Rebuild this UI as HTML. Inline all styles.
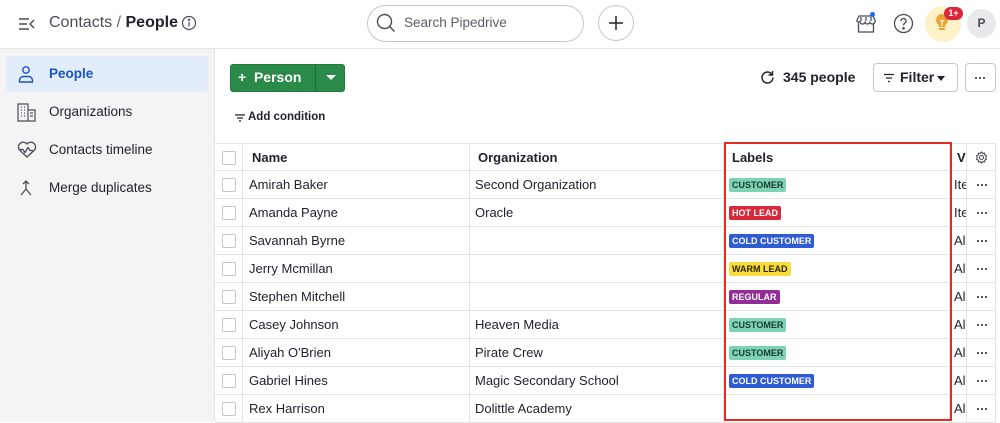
<!DOCTYPE html>
<html><head><meta charset="utf-8"><style>
*{box-sizing:border-box;margin:0;padding:0}
body{width:1000px;height:422px;overflow:hidden;background:#fff;font-family:"Liberation Sans",sans-serif;color:#21232c;position:relative;font-size:13px}
.a{position:absolute}
.hdr{left:0;top:0;width:1000px;height:49px;border-bottom:1px solid #e3e4e6;background:#fff}
.side{left:0;top:49px;width:215px;height:373px;background:#f4f4f5;border-right:1px solid #e3e4e6}
.nav{position:absolute;left:6px;width:202px;height:36px;border-radius:4px;font-size:13.5px;line-height:36px;padding-left:43px;color:#21232c}
.nav svg{position:absolute;left:11px;top:9px}
.tbl{left:215px;top:143px;width:781px}
.row{position:absolute;left:0;width:781px;height:28px;border-bottom:1px solid #e3e4e6;font-size:13px;line-height:27px}
.c{position:absolute;top:0;height:28px;border-right:1px solid #e3e4e6;padding-left:6px;white-space:nowrap;overflow:hidden}
.cb{position:absolute;left:7px;top:7px;width:14px;height:14px;border:1px solid #c5c7cc;border-radius:2px;background:#fff}
.lb{display:inline-block;font-size:9px;font-weight:bold;line-height:14px;padding:0 3px;border-radius:2px;vertical-align:middle;margin-top:-2px}
.cu{background:#7dd3b4;color:#1b3a30}.hl{background:#d9283a;color:#fff}.cc{background:#2f5bd6;color:#fff}.wl{background:#f8dc3c;color:#2b2500}.rg{background:#922d97;color:#fff}
.dots{position:absolute;display:flex;gap:2px}
.dots i{width:2px;height:2px;border-radius:50%;background:#21232c;display:block}
</style></head><body>
<div class="a hdr"></div>
<svg class="a" style="left:18px;top:16px" width="18" height="16" viewBox="0 0 18 16" fill="none" stroke="#4a4d57" stroke-width="1.4"><path d="M1 3h10M1 8h8M1 13h10M16 4l-4 4 4 4"/></svg>
<div class="a" style="left:49px;top:14px;font-size:16px;color:#4a4d57">Contacts <span style="color:#6a6d77">/</span> <b style="color:#21232c">People</b></div>
<svg class="a" style="left:181px;top:15px" width="16" height="16" viewBox="0 0 16 16" fill="none" stroke="#4a4d57" stroke-width="1.2"><circle cx="8" cy="8" r="6.5"/><path d="M8 7v4.5"/><circle cx="8" cy="4.8" r=".6" fill="#4a4d57"/></svg>
<div class="a" style="left:367px;top:5px;width:217px;height:37px;border:1px solid #c5c7cc;border-radius:19px"></div>
<svg class="a" style="left:375px;top:12px" width="22" height="22" viewBox="0 0 22 22" fill="none" stroke="#4a4d57" stroke-width="1.4"><circle cx="9.5" cy="9.5" r="7"/><path d="M14.5 14.5l5 5"/></svg>
<div class="a" style="left:404px;top:15px;font-size:13.5px;color:#5a5d67">Search Pipedrive</div>
<div class="a" style="left:598px;top:5px;width:36px;height:36px;border:1px solid #c5c7cc;border-radius:50%"></div>
<svg class="a" style="left:608px;top:15px" width="16" height="16" viewBox="0 0 16 16" stroke="#21232c" stroke-width="1.5"><path d="M8 1v14M1 8h14"/></svg>
<svg class="a" style="left:855px;top:14px" width="22" height="20" viewBox="0 0 22 20" fill="none" stroke="#4a4d57" stroke-width="1.3"><path d="M2 6l2-4h14l2 4v1.5a2.5 2.5 0 01-5 0 2.5 2.5 0 01-5 0 2.5 2.5 0 01-5 0 2.5 2.5 0 01-3 0z M3.5 9v9h15V9M6 3v4M11 3v4M16 3v4"/></svg>
<div class="a" style="left:870px;top:12px;width:5px;height:5px;border-radius:50%;background:#1a6ef0"></div>
<svg class="a" style="left:893px;top:13px" width="21" height="21" viewBox="0 0 21 21" fill="none" stroke="#4a4d57" stroke-width="1.3"><circle cx="10.5" cy="10.5" r="9"/><path d="M8 8a2.5 2.5 0 114 2c-1 .7-1.5 1.2-1.5 2.5"/><circle cx="10.5" cy="15.3" r=".7" fill="#4a4d57"/></svg>
<div class="a" style="left:925px;top:6px;width:36px;height:36px;border-radius:50%;background:#fdf1c8"></div>
<svg class="a" style="left:935px;top:13px" width="14" height="20" viewBox="0 0 14 20"><path d="M7 1a6 6 0 00-3.5 10.8V14h7v-2.2A6 6 0 007 1z" fill="#eba430"/><rect x="3.8" y="15" width="6.4" height="2" rx="1" fill="#eba430"/><path d="M5 7l2 2 2-2M7 9v4" stroke="#fff" stroke-width="1.1" fill="none"/></svg>
<div class="a" style="left:944px;top:7px;width:19px;height:13px;border-radius:7px;background:#d9283a;color:#fff;font-size:9px;font-weight:bold;text-align:center;line-height:13px">1+</div>
<div class="a" style="left:967px;top:9px;width:29px;height:29px;border-radius:50%;background:#e8e9eb;color:#4a4d57;font-size:12px;font-weight:bold;text-align:center;line-height:29px">P</div>

<div class="a side">
<div class="nav" style="top:7px;background:#e2ecfb;color:#1754c4;font-weight:bold"><svg width="18" height="18" viewBox="0 0 18 18" fill="none" stroke="#1754c4" stroke-width="1.4"><circle cx="9" cy="5" r="3.2"/><path d="M2.5 17v-1.5a4 4 0 014-4h5a4 4 0 014 4V17z"/></svg>People</div>
<div class="nav" style="top:45px"><svg width="19" height="19" viewBox="0 0 19 19" fill="none" stroke="#4a4d57" stroke-width="1.2"><path d="M1 1h10v17H1zM11 7h7v11h-7M4 4h1M7 4h1M4 7h1M7 7h1M4 10h1M7 10h1M4 13h1M7 13h1M13 10h3M13 13h3"/></svg>Organizations</div>
<div class="nav" style="top:83px"><svg width="20" height="18" viewBox="0 0 20 18" fill="none" stroke="#4a4d57" stroke-width="1.3"><path d="M10 16L2.5 9A4.5 4.5 0 0110 3a4.5 4.5 0 017.5 6z M3 8.5h3l2 3 3-5 2 3h3"/></svg>Contacts timeline</div>
<div class="nav" style="top:121px"><svg width="18" height="18" viewBox="0 0 18 18" fill="none" stroke="#4a4d57" stroke-width="1.3"><path d="M9 2v8M6 5l3-3 3 3M9 10l-5 6M9 10l5 6"/></svg>Merge duplicates</div>
</div>

<div class="a" style="left:230px;top:64px;width:115px;height:28px;background:#2a8a4a;border-radius:3px;border:1px solid #1f7a3e"></div>
<div class="a" style="left:315px;top:64px;width:1px;height:28px;background:#1c6a37"></div>
<div class="a" style="left:238px;top:69px;color:#fff;font-size:14px;font-weight:bold">+&nbsp;&nbsp;Person</div>
<div class="a" style="left:326px;top:75px;border-left:5px solid transparent;border-right:5px solid transparent;border-top:5px solid #fff"></div>
<svg class="a" style="left:234px;top:113px" width="12" height="10" viewBox="0 0 12 10" stroke="#21232c" stroke-width="1.2"><path d="M1 2h10M3 5h6M5 8h2"/></svg>
<div class="a" style="left:248px;top:111px;font-size:11.5px;font-weight:bold">Add condition</div>

<svg class="a" style="left:760px;top:70px" width="15" height="15" viewBox="0 0 15 15" fill="none" stroke="#21232c" stroke-width="1.4"><path d="M13 7.5A5.5 5.5 0 117.5 2 5.5 5.5 0 0112 4.5M12.5 1v4h-4"/></svg>
<div class="a" style="left:783px;top:69px;font-size:14px;font-weight:bold">345 people</div>
<div class="a" style="left:873px;top:63px;width:85px;height:29px;border:1px solid #c5c7cc;border-radius:4px"></div>
<svg class="a" style="left:883px;top:73px" width="12" height="10" viewBox="0 0 12 10" stroke="#21232c" stroke-width="1.3"><path d="M1 1.5h10M3 5h6M5 8.5h2"/></svg>
<div class="a" style="left:900px;top:69px;font-size:14px;font-weight:bold">Filter</div>
<div class="a" style="left:937px;top:76px;border-left:4.5px solid transparent;border-right:4.5px solid transparent;border-top:5px solid #21232c"></div>
<div class="a" style="left:965px;top:63px;width:31px;height:29px;border:1px solid #c5c7cc;border-radius:4px"></div>
<div class="dots" style="left:975px;top:77px"><i></i><i></i><i></i></div>

<div class="a tbl">
<div class="row" style="top:0;border-top:1px solid #e3e4e6;font-weight:bold">
<div class="c" style="left:0;width:28px"><div class="cb"></div></div>
<div class="c" style="left:28px;width:227px;padding-left:9px">Name</div>
<div class="c" style="left:255px;width:254px;padding-left:8px">Organization</div>
<div class="c" style="left:509px;width:226px;padding-left:8px">Labels</div>
<div class="c" style="left:735px;width:17px;padding-left:7px">V</div>
<div class="c" style="left:752px;width:29px"><svg style="position:absolute;left:8px;top:7px" width="13" height="13" viewBox="0 0 13 13" fill="none" stroke="#4a4d57" stroke-width="1.1"><circle cx="6.5" cy="6.5" r="2"/><path d="M6.5 1l1.2 1.4 1.8-.3.3 1.8 1.6.9-.7 1.7.7 1.7-1.6.9-.3 1.8-1.8-.3-1.2 1.4-1.2-1.4-1.8.3-.3-1.8-1.6-.9.7-1.7-.7-1.7 1.6-.9.3-1.8 1.8.3z"/></svg></div>
</div>
</div>
<div class="a" style="left:724px;top:142px;width:228px;height:279px;border:2px solid #ea2a22"></div>
<script>
var d=[["Amirah Baker","Second Organization","cu","CUSTOMER","Ite"],["Amanda Payne","Oracle","hl","HOT LEAD","Ite"],["Savannah Byrne","","cc","COLD CUSTOMER","Al"],["Jerry Mcmillan","","wl","WARM LEAD","Al"],["Stephen Mitchell","","rg","REGULAR","Al"],["Casey Johnson","Heaven Media","cu","CUSTOMER","Al"],["Aliyah O'Brien","Pirate Crew","cu","CUSTOMER","Al"],["Gabriel Hines","Magic Secondary School","cc","COLD CUSTOMER","Al"],["Rex Harrison","Dolittle Academy","","","Al"]];
var h="";d.forEach(function(r,i){h+='<div class="row" style="top:'+(28*(i+1))+'px"><div class="c" style="left:0;width:28px"><div class="cb"></div></div><div class="c" style="left:28px;width:227px">'+r[0]+'</div><div class="c" style="left:255px;width:254px;padding-left:5px">'+r[1]+'</div><div class="c" style="left:509px;width:226px;padding-left:5px">'+(r[2]?'<span class="lb '+r[2]+'">'+r[3]+'</span>':'')+'</div><div class="c" style="left:735px;width:17px;padding-left:4px">'+r[4]+'</div><div class="c" style="left:752px;width:29px"><div class="dots" style="left:10px;top:13px"><i></i><i></i><i></i></div></div></div>';});
document.querySelector(".tbl").innerHTML+=h;
</script>
</body></html>
